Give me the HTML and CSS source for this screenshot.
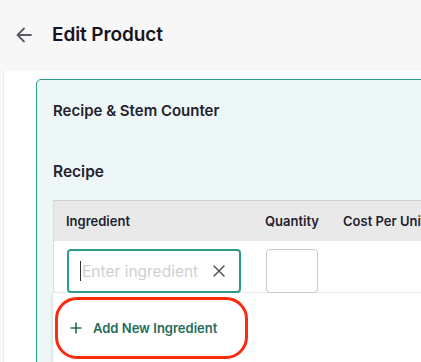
FILE: index.html
```html
<!DOCTYPE html>
<html>
<head>
<meta charset="utf-8">
<link rel="stylesheet" href="styles.css">
</head>
<body>
<header class="topbar">
  <svg class="back" width="18" height="18" viewBox="0 0 18 18" aria-hidden="true">
    <path d="M16 9H3M9 2.5L2.5 9L9 15.5" fill="none" stroke="#5b5868" stroke-width="1.8" stroke-linecap="round" stroke-linejoin="round"/>
  </svg>
  <h1 class="title">Edit Product</h1>
</header>
<main class="panel">
  <section class="card">
    <h2 class="card-title">Recipe &amp; Stem Counter</h2>
    <h3 class="section-title">Recipe</h3>
    <div class="table">
      <div class="thead">
        <div class="th col-ing">Ingredient</div>
        <div class="th col-qty">Quantity</div>
        <div class="th col-cost">Cost Per Unit</div>
      </div>
      <div class="trow">
        <div class="td col-ing">
          <div class="ing-input">
            <span class="caret"></span>
            <span class="placeholder">Enter ingredient</span>
            <svg class="clear" width="12" height="12" viewBox="0 0 12 12" aria-hidden="true">
              <path d="M1 1L11 11M11 1L1 11" stroke="#55525e" stroke-width="1.5" stroke-linecap="round"/>
            </svg>
          </div>
        </div>
        <div class="td col-qty"><div class="qty-input"></div></div>
        <div class="td col-cost"></div>
      </div>
      <div class="dropdown">
        <div class="add-item">
          <svg width="12" height="12" viewBox="0 0 12 12" aria-hidden="true">
            <path d="M6 0.5V11.5M0.5 6H11.5" stroke="#1e6b5c" stroke-width="1.6"/>
          </svg>
          <span>Add New Ingredient</span>
        </div>
        <div class="highlight"></div>
      </div>
    </div>
  </section>
</main>
</body>
</html>
```
FILE: styles.css
```css
html, body {
  margin: 0;
  padding: 0;
  width: 421px;
  height: 362px;
  overflow: hidden;
  background: #f7f7f7;
  font-family: Inter, "Noto Sans", sans-serif;
}
.topbar {
  height: 71px;
  display: flex;
  align-items: center;
  padding: 0 0 2px 15px;
  box-sizing: border-box;
}
.back { margin-right: 19px; }
.title {
  margin: 0;
  font-size: 19px;
  font-weight: 600;
  color: #17141f;
  letter-spacing: -0.1px;
}
.panel {
  margin-left: 3px;
  border-left: 1px solid #e8e8e8;
  background: #fff;
  height: 291px;
  padding: 8px 0 0 32px;
  box-sizing: border-box;
  overflow: hidden;
}
.card {
  width: 600px;
  height: 320px;
  background: #eef7f8;
  border: 1.5px solid #2a9d8f;
  border-radius: 5px 0 0 0;
  padding: 0 0 0 16px;
  box-sizing: border-box;
}
.card-title {
  margin: 0;
  padding-top: 21px;
  font-size: 15px;
  line-height: 20px;
  font-weight: 600;
  color: #24222f;
}
.section-title {
  margin: 41px 0 0;
  font-size: 15.5px;
  line-height: 20px;
  font-weight: 600;
  color: #24222f;
}
.table {
  position: relative;
  margin-top: 18px;
  min-height: 200px;
  border-top: 1px solid #cfcfcf;
  border-left: 1px solid #dcdcdc;
  background: #fff;
}
.thead, .trow {
  display: grid;
  grid-template-columns: 199px 78px 1fr;
}
.thead {
  height: 40px;
  background: #e9e9e9;
  align-items: center;
}
.th {
  padding-left: 12px;
  font-size: 13px;
  font-weight: 600;
  color: #24222f;
  white-space: nowrap;
}
.trow {
  height: 52px;
  border-bottom: 1px solid #ececec;
  box-sizing: border-box;
}
.td { padding: 8px 0 0 13px; }
.ing-input {
  width: 174px;
  height: 44px;
  box-sizing: border-box;
  border: 2px solid #2a9d8f;
  border-radius: 4px;
  display: flex;
  align-items: center;
  padding: 0 14px 0 11px;
  background: #fff;
}
.caret {
  width: 1px;
  height: 20px;
  background: #333;
  margin-right: 1px;
}
.placeholder {
  flex: 1;
  font-size: 15.5px;
  color: #cfcfd2;
}
.qty-input {
  width: 52px;
  height: 44px;
  box-sizing: border-box;
  border: 1px solid #c9c9c9;
  border-radius: 4px;
}
.dropdown {
  position: absolute;
  left: -1px;
  top: 92px;
  width: 200px;
  height: 80px;
  background: #fff;
  box-shadow: -1px 1px 3px rgba(0,0,0,0.12);
}
.add-item {
  display: flex;
  align-items: center;
  gap: 11px;
  padding: 27px 0 0 17px;
  font-size: 13px;
  font-weight: 600;
  color: #1e6b5c;
}
.highlight {
  position: absolute;
  left: 2px;
  top: 4px;
  width: 193px;
  height: 62px;
  box-sizing: border-box;
  border: 3.5px solid #fb2b10;
  border-radius: 22px;
}
```
